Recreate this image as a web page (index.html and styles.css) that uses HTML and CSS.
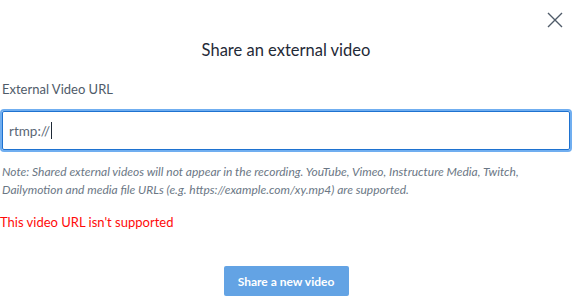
FILE: index.html
```html
<!DOCTYPE html>
<html>
<head>
<meta charset="utf-8">
<link rel="stylesheet" href="styles.css">
</head>
<body>
<div class="modal">
  <button class="close" aria-label="Close">
    <svg width="16" height="16" viewBox="0 0 16 16"><path d="M1 1L15 15M15 1L1 15" stroke="#4f5b69" stroke-width="1.4" fill="none"/></svg>
  </button>
  <h2 class="title">Share an external video</h2>
  <label class="label" for="url">External Video URL</label>
  <div class="field"><span class="value">rtmp://</span><span class="caret"></span></div>
  <p class="note">Note: Shared external videos will not appear in the recording. YouTube, Vimeo, Instructure Media, Twitch, Dailymotion and media file URLs (e.g. https://example.com/xy.mp4) are supported.</p>
  <p class="error">This video URL isn't supported</p>
  <div class="actions"><button class="share">Share a new video</button></div>
</div>
</body>
</html>
```
FILE: styles.css
```css
html, body {
  margin: 0;
  padding: 0;
  background: #fff;
}
body {
  font-family: Lato, "Noto Sans", sans-serif;
}
.modal {
  position: relative;
  width: 572px;
  padding-top: 38px;
}
.close {
  position: absolute;
  top: 12px;
  left: 547px;
  width: 16px;
  height: 16px;
  padding: 0;
  border: 0;
  background: none;
  display: flex;
}
.title {
  margin: 0;
  text-align: center;
  font-size: 16.5px;
  font-weight: 400;
  line-height: 24px;
  color: #1f2a37;
}
.label {
  display: block;
  margin: 18px 0 0 2px;
  font-size: 13px;
  line-height: 18px;
  color: #4f5b69;
}
.field {
  margin: 13px 2px 0;
  height: 37px;
  border: 1px solid #1e72d0;
  border-radius: 2px;
  box-shadow: 0 0 0 2px #70aef0;
  display: flex;
  align-items: center;
  padding-left: 6px;
  font-size: 13.5px;
  color: #5a6775;
}
.caret {
  width: 1px;
  height: 17px;
  background: #1f2a37;
  margin-left: 1px;
}
.note {
  margin: 13px 0 0 2px;
  font-size: 12px;
  line-height: 18px;
  font-style: italic;
  color: #6b7785;
}
.error {
  margin: 14px 0 0;
  font-size: 13px;
  line-height: 18px;
  color: #ff0a0a;
}
.actions {
  display: flex;
  justify-content: center;
  margin-top: 35px;
}
.share {
  width: 125px;
  height: 30px;
  border: 0;
  border-radius: 2px;
  background: #63a3e4;
  color: #fff;
  font-family: Lato, "Noto Sans", sans-serif;
  font-size: 12px;
  font-weight: 700;
  padding: 0;
}
```
